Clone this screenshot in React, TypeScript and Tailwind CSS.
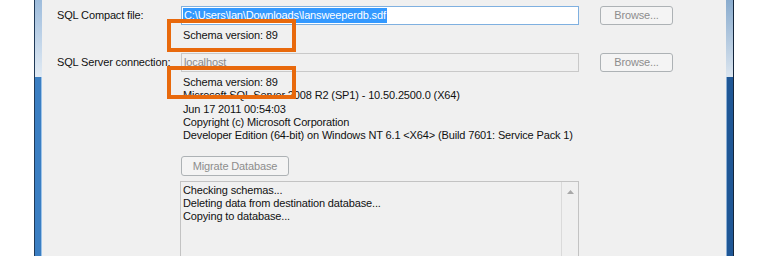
import React from "react";

const font = { fontFamily: '"Liberation Sans", Arial, sans-serif' };

const serverInfo = [
  "Schema version: 89",
  "Microsoft SQL Server 2008 R2 (SP1) - 10.50.2500.0 (X64)",
  "Jun 17 2011 00:54:03",
  "Copyright (c) Microsoft Corporation",
  "Developer Edition (64-bit) on Windows NT 6.1 <X64> (Build 7601: Service Pack 1)",
];

const logLines = [
  "Checking schemas...",
  "Deleting data from destination database...",
  "Copying to database...",
];

const BrowseButton: React.FC = () => (
  <div className="ml-[21px] w-[73px] h-[19px] rounded-[3px] border border-[#adb2b5] bg-[#f4f4f4] flex items-center justify-center text-[11px] text-[#8d8d8d]">
    Browse...
  </div>
);

const Highlight: React.FC<{ top: number }> = ({ top }) => (
  <div
    className="absolute left-[125px] w-[129px] h-[33px] border-[4px] border-[#e8690c]"
    style={{ top }}
  />
);

const App: React.FC = () => {
  return (
    <div className="w-[768px] h-[256px] bg-white flex overflow-hidden" style={font}>
      <div className="w-[34px] shrink-0" />
      {/* left frame */}
      <div className="w-[8px] shrink-0 flex flex-col border-l border-[#203a58]">
        <div className="h-[77px] bg-gradient-to-b from-[#9dbcdc] to-[#e2ebf4]" />
        <div className="flex-1 bg-[#3b7ec2] border-r border-[#9cc3e8]" />
      </div>

      <div className="relative flex-1 bg-[#f0f0f0] pl-[15px] text-[11px] tracking-[-0.14px] text-[#111]">
        {/* row 1 */}
        <div className="mt-[6px] flex items-center">
          <div className="w-[124px] leading-[19px]">SQL Compact file:</div>
          <div className="w-[398px] h-[19px] border border-[#7fb0e0] bg-white flex items-center px-[1px]">
            <span className="bg-[#3399ff] text-white leading-[15px] px-[1px]">
              C:\Users\lan\Downloads\lansweeperdb.sdf
            </span>
          </div>
          <BrowseButton />
        </div>
        <div className="ml-[126px] mt-[4px] leading-[13px]">Schema version: 89</div>

        {/* row 2 */}
        <div className="mt-[11px] flex items-center">
          <div className="w-[124px] leading-[19px]">SQL Server connection:</div>
          <div className="w-[398px] h-[19px] border border-[#c9c9c9] bg-[#f0f0f0] flex items-center px-[2px] text-[#8a8a8a]">
            localhost
          </div>
          <BrowseButton />
        </div>
        <div className="ml-[126px] mt-[4px] leading-[13.3px]">
          {serverInfo.map((line) => (
            <div key={line}>{line}</div>
          ))}
        </div>

        <div className="ml-[124px] mt-[14px] w-[108px] h-[20px] rounded-[3px] border border-[#adb2b5] bg-[#f4f4f4] flex items-center justify-center text-[#8d8d8d]">
          Migrate Database
        </div>

        <div className="ml-[123px] mt-[5px] w-[399px] h-[90px] border border-[#c3c3c3] bg-[#f0f0f0] flex">
          <div className="flex-1 px-[2px] pt-[2px] leading-[13px]">
            {logLines.map((line) => (
              <div key={line}>{line}</div>
            ))}
          </div>
          <div className="w-[17px] border-l border-[#dadada] flex justify-center pt-[8px]">
            <svg width="7" height="4" viewBox="0 0 7 4">
              <path d="M0 4 L3.5 0 L7 4 Z" fill="#a8a8a8" />
            </svg>
          </div>
        </div>

        <Highlight top={19} />
        <Highlight top={66} />
      </div>

      {/* right frame */}
      <div className="w-[8px] shrink-0 flex flex-col border-r border-[#14253a]">
        <div className="h-[77px] bg-gradient-to-b from-[#8aacce] to-[#dbe5ef]" />
        <div className="flex-1 bg-[#1f5796] border-l border-[#8aaed4]" />
      </div>
      <div className="w-[34px] shrink-0" />
    </div>
  );
};

export default App;
